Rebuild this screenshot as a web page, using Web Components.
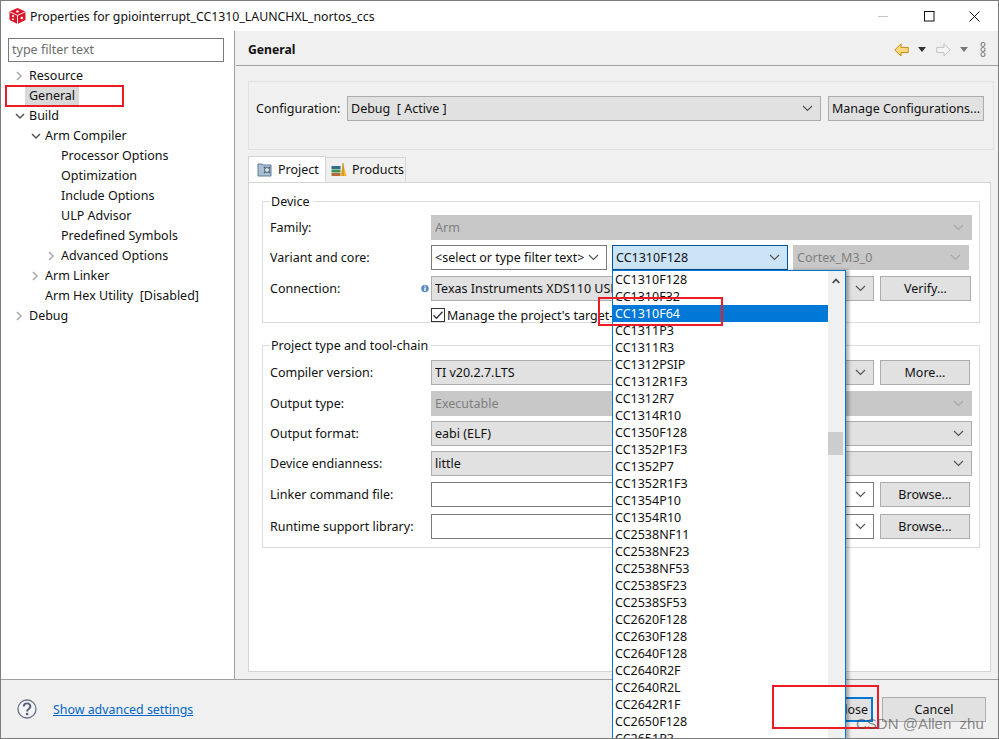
<!DOCTYPE html>
<html><head><meta charset="utf-8"><title>Properties</title>
<style>
html,body{margin:0;padding:0;background:#fff}
body{font:12.5px "Noto Sans","Open Sans",sans-serif;color:#111}
</style></head><body>
<x-window></x-window>
<script>
const CHEV=(c,w=1.2)=>`<svg width="11" height="7" viewBox="0 0 11 7"><path d="M1 1l4.5 4.5L10 1" fill="none" stroke="${c}" stroke-width="${w}"/></svg>`;
function def(name,css,render){
  customElements.define(name,class extends HTMLElement{
    constructor(){super();this.attachShadow({mode:'open'});}
    connectedCallback(){ if(this._d)return; this._d=1; this.shadowRoot.innerHTML=`<style>${css}</style>`+render(this); }
  });
}
const A=(e,n,d='')=>e.getAttribute(n)??d;

def('x-titlebar',`:host{display:flex;align-items:center;height:30px;background:#fff;font-size:12.3px;padding-left:8px;color:#111}
 .t{margin-left:4px;flex:1;white-space:pre}
 .w{display:flex;align-items:center;justify-content:center;width:46px;height:30px}`,
 ()=>`<svg width="17" height="16" viewBox="0 0 17 16"><path d="M8.5 0L16.5 3.6V12L8.5 16L.5 12V3.6Z" fill="#d8172a"/><path d="M.8 3.8L8.5 7.4L16.2 3.8M8.5 7.4V16" stroke="#fff" stroke-width=".9" fill="none"/><circle cx="8.5" cy="3.4" r="1.2" fill="#fff"/><circle cx="4" cy="8" r="1.1" fill="#fff"/><circle cx="4" cy="11.2" r=".9" fill="#fff"/><circle cx="12.8" cy="10" r="1.2" fill="#fff"/></svg>
 <span class="t">Properties for gpiointerrupt_CC1310_LAUNCHXL_nortos_ccs</span>
 <span class="w"><svg width="11" height="11"><path d="M0 5.5h10" stroke="#c4c4c4"/></svg></span>
 <span class="w"><svg width="11" height="11"><rect x=".5" y=".5" width="9.5" height="9.5" fill="none" stroke="#111"/></svg></span>
 <span class="w" style="width:44px;padding-right:2px"><svg width="11" height="11"><path d="M.5 .5l10 10M10.5 .5l-10 10" stroke="#111" fill="none"/></svg></span>`);

def('x-tree-item',`:host{display:flex;align-items:center;height:20px;white-space:pre}
 .tw{display:flex;width:13px;height:20px;align-items:center;justify-content:center;margin-right:3px}
 .l{padding:0 2px;height:18px;line-height:17px;margin-left:-2px}
 :host([selected]) .l{background:#d9d9d9;padding:0 4px 0 4px;margin-left:-4px}`,
 e=>{const lv=+A(e,'level','0'),t=A(e,'twisty');
  const ic=t==='open'?`<svg width="10" height="7" viewBox="0 0 10 7"><path d="M1 1l4 4 4-4" fill="none" stroke="#555" stroke-width="1.5"/></svg>`:
    t==='closed'?`<svg width="7" height="10" viewBox="0 0 7 10"><path d="M1 1l4 4-4 4" fill="none" stroke="#aaa" stroke-width="1.5"/></svg>`:'';
  return `<span style="width:${12+16*lv}px;flex:none"></span><span class="tw">${ic}</span><span class="l"><slot></slot></span>`});

def('x-tree',`:host{display:block;background:#fff;width:234px;flex:none;box-sizing:border-box;border-right:1px solid #a0a0a0;padding-top:7px}
 .f{box-sizing:border-box;margin-left:7px;width:216px;height:24px;border:1px solid #7a7a7a;color:#6d6d6d;padding:0 3px;line-height:21px;margin-bottom:4px}`,
 ()=>`<div class="f">type filter text</div><slot></slot>`);

def('x-header',`:host{display:flex;align-items:center;height:35px;box-sizing:border-box;border-bottom:1px solid #a0a0a0;padding:3px 0 0 12px;font-weight:700;font-size:12.2px;color:#111}
 .b{flex:1}.i{display:flex;align-items:center;margin-right:9px}`,
 ()=>`<span class="b">General</span>
 <span class="i"><svg width="15" height="14" viewBox="0 0 15 14"><path d="M7 .8L.8 7 7 13V9.6h7.2V4.4H7z" fill="#fcd97c" stroke="#c78a12" stroke-width="1"/></svg></span>
 <span class="i" style="margin-right:10px"><svg width="8" height="5"><path d="M0 0h8L4 5z" fill="#333"/></svg></span>
 <span class="i"><svg width="15" height="14" viewBox="0 0 15 14"><path d="M8 .8L14.2 7 8 13V9.6H.8V4.4H8z" fill="#f4f4f4" stroke="#c2c2c2" stroke-width="1"/></svg></span>
 <span class="i" style="margin-right:12px"><svg width="8" height="5"><path d="M0 0h8L4 5z" fill="#777"/></svg></span>
 <span class="i" style="margin-right:12px"><svg width="6" height="15" viewBox="0 0 6 15"><g fill="none" stroke="#8a8a8a" stroke-width="1.2"><circle cx="3" cy="2.5" r="2"/><circle cx="3" cy="7.5" r="2"/><circle cx="3" cy="12.5" r="2"/></g></svg></span>`);

def('x-combo',`:host{display:flex;align-items:center;box-sizing:border-box;height:25px;padding:0 7px 0 3px;white-space:pre;overflow:hidden;border:1px solid #adadad;background:#e1e1e1;color:#111}
 :host([kind=disabled]){background:#c8c8c8;border-color:#c8c8c8;color:#7f7f7f}
 :host([kind=white]){background:#fff;border-color:#7a7a7a}
 :host([kind=blue]){background:#cce4f7;border-color:#005499}
 .t{flex:1;overflow:hidden}.c{display:flex;flex:none;margin-left:4px}`,
 e=>`<span class="t"><slot></slot></span><span class="c">${CHEV(A(e,'kind')==='disabled'?'#a8a8a8':'#555')}</span>`);

def('x-btn',`:host{display:flex;align-items:center;justify-content:center;box-sizing:border-box;height:25px;border:1px solid #adadad;background:#e1e1e1;color:#111;white-space:nowrap;overflow:hidden}
 :host([def]){border:2px solid #0078d7}`,()=>`<slot></slot>`);

def('x-group',`:host{display:block}
 fieldset{margin:0;padding:0 7px 0 7px;border:1px solid #dcdcdc;min-width:0}
 legend{padding:0 3px 0 1px;margin-left:0;line-height:17px;height:17px}`,
 e=>`<fieldset><legend>${A(e,'label')}</legend><slot></slot></fieldset>`);

def('x-row',`:host{display:grid;grid-template-columns:161px 1fr;align-items:center;height:25px}
 .l{white-space:pre}
 .c{display:flex;gap:5px;align-items:center;min-width:0}`,
 e=>`<span class="l">${A(e,'label')}</span><div class="c"><slot></slot></div>`);

def('x-tabs',`:host{display:flex;align-items:flex-end;height:25px;position:relative;z-index:1;margin-bottom:-1px}
 .t{display:flex;align-items:center;box-sizing:border-box;border:1px solid #d4d4d4;border-bottom:0}
 .a{height:26px;width:78px;background:#fff;padding-left:8px;gap:5px;border-bottom:1px solid #fff}
 .b{height:24px;width:81px;margin-left:-1px;padding-left:5px;gap:5px;background:#f0f0f0;margin-bottom:1px}`,
 ()=>`<div class="t a"><svg width="16" height="15" viewBox="0 0 16 15"><path d="M1 2h4l1 1h8v11H1z" fill="#a9bfd4" stroke="#5f7d99"/><path d="M7 5l6 6M13 5l-6 6" stroke="#4f6478" stroke-width="1.6"/><circle cx="10" cy="8" r="2.4" fill="#dfe8ef" stroke="#4f6478"/></svg><span>Project</span></div>
 <div class="t b"><svg width="16" height="14" viewBox="0 0 16 14"><rect x=".5" y="3" width="9" height="3" fill="#2f6f87"/><rect x=".5" y="6.5" width="9" height="3" fill="#3f9150"/><rect x=".5" y="10" width="9" height="3" fill="#b56a3a"/><path d="M12 0l3.5 13h-6z" fill="#f2b632"/><path d="M12 0v13" stroke="#b5821c"/></svg><span>Products</span></div>`);

def('x-checkbox',`:host{display:flex;align-items:center;height:14px;white-space:nowrap;gap:2px}`,
 ()=>`<svg width="14" height="14" viewBox="0 0 14 14" style="flex:none"><rect x=".5" y=".5" width="13" height="13" fill="#fff" stroke="#333"/><path d="M2.5 7.2l3 3 6-6.4" fill="none" stroke="#333" stroke-width="1.3"/></svg><slot></slot>`);

def('x-footer',`:host{display:flex;box-sizing:border-box;height:59px;border-top:1px solid #a0a0a0;background:#f0f0f0;padding:17px 12px 0 16px;align-items:flex-start}
 a{color:#0066cc;text-decoration:underline;margin-left:16px;line-height:26px;font-size:12.4px}
 .s{flex:1}`,
 ()=>`<svg width="20" height="20" viewBox="0 0 20 20" style="margin-top:2px"><circle cx="10" cy="10" r="9" fill="#f4f4f6" stroke="#66708a" stroke-width="1.3"/><path d="M6.8 7.6c0-4.2 6.6-4.2 6.6-.2 0 2.6-3.3 2.4-3.3 5" fill="none" stroke="#525c78" stroke-width="1.9"/><circle cx="10.1" cy="15" r="1.3" fill="#525c78"/></svg>
 <a>Show advanced settings</a><span class="s"></span>
 <x-btn def style="width:105px;justify-content:flex-end;padding:0 3px 1px 0">Apply and Close</x-btn>
 <x-btn style="width:104px;margin-left:9px;padding-bottom:1px">Cancel</x-btn>`);

def('x-dropdown',`:host{position:absolute;width:234px;height:469px;box-sizing:border-box;border:solid #0078d7;border-width:1px 1px 0 1px;background:#fff;display:flex;box-shadow:3px 0 3px rgba(0,0,0,.3);overflow:hidden;z-index:5}
 .l{flex:1;min-width:0}
 .i{height:17px;line-height:17px;padding-left:2px;color:#111}
 .i.s{background:#0078d7;color:#fff}
 .sb{width:17px;background:#f0f0f0;position:relative;flex:none}
 .up{position:absolute;left:4px;top:7px;display:flex}
 .th{position:absolute;left:0;top:161px;width:15px;height:23px;background:#cdcdcd}`,
 ()=>{const L="CC1310F128 CC1310F32 CC1310F64 CC1311P3 CC1311R3 CC1312PSIP CC1312R1F3 CC1312R7 CC1314R10 CC1350F128 CC1352P1F3 CC1352P7 CC1352R1F3 CC1354P10 CC1354R10 CC2538NF11 CC2538NF23 CC2538NF53 CC2538SF23 CC2538SF53 CC2620F128 CC2630F128 CC2640F128 CC2640R2F CC2640R2L CC2642R1F CC2650F128 CC2651P3".split(' ');
  return `<div class="l">${L.map((x,i)=>`<div class="i${i==2?' s':''}">${x}</div>`).join('')}</div>
  <div class="sb"><span class="up"><svg width="8" height="6" viewBox="0 0 8 6"><path d="M.7 5L4 1.5 7.3 5" fill="none" stroke="#444" stroke-width="1.7"/></svg></span><span class="th"></span></div>`});

def('x-mark',`:host{position:absolute;box-sizing:border-box;border:2px solid #ed1c24;z-index:7}`,()=>`<slot></slot>`);
def('x-patch',`:host{position:absolute;background:#fff;z-index:6}`,()=>``);
def('x-watermark',`:host{position:absolute;z-index:8;font:15px "Liberation Sans",sans-serif;color:rgba(70,70,70,.62);white-space:pre}`,()=>`<slot></slot>`);

def('x-window',`:host{display:block;position:relative;width:999px;height:739px;box-sizing:border-box;border:1px solid #7c7c7c;overflow:hidden;background:#f0f0f0}
 .main{display:flex;height:648px}
 .r{flex:1;min-width:0;padding:0;background:#f0f0f0;border-left:1px solid #f0f0f0}
 .cfg{display:flex;align-items:center;box-sizing:border-box;height:69px;margin:15px 4px 0 12px;border:1px solid #e1e1e1;padding:0 9px 15px 7px;gap:7px}
 .tabs{margin:7px 7px 0 12px}
 .fold{box-sizing:border-box;height:490px;margin:0 7px 0 12px;background:#fff;border:1px solid #d4d4d4;padding:10px 10px 0 13px}
 x-row{margin-top:5px}`,
 ()=>`<x-titlebar></x-titlebar>
 <div class="main">
  <x-tree>
   <x-tree-item twisty="closed">Resource</x-tree-item>
   <x-tree-item selected>General</x-tree-item>
   <x-tree-item twisty="open">Build</x-tree-item>
   <x-tree-item level="1" twisty="open">Arm Compiler</x-tree-item>
   <x-tree-item level="2">Processor Options</x-tree-item>
   <x-tree-item level="2">Optimization</x-tree-item>
   <x-tree-item level="2">Include Options</x-tree-item>
   <x-tree-item level="2">ULP Advisor</x-tree-item>
   <x-tree-item level="2">Predefined Symbols</x-tree-item>
   <x-tree-item level="2" twisty="closed">Advanced Options</x-tree-item>
   <x-tree-item level="1" twisty="closed">Arm Linker</x-tree-item>
   <x-tree-item level="1">Arm Hex Utility  [Disabled]</x-tree-item>
   <x-tree-item twisty="closed">Debug</x-tree-item>
  </x-tree>
  <div class="r">
   <x-header></x-header>
   <div class="cfg"><span style="width:84px;white-space:nowrap">Configuration:</span><x-combo style="width:474px;flex:none">Debug  [ Active ]</x-combo><x-btn style="flex:1">Manage Configurations...</x-btn></div>
   <x-tabs class="tabs"></x-tabs>
   <div class="fold">
    <x-group label="Device" style="height:138px">
     <x-row label="Family:"><x-combo kind="disabled" style="flex:1">Arm</x-combo></x-row>
     <x-row label="Variant and core:"><x-combo kind="white" style="width:176px">&lt;select or type filter text&gt;</x-combo><x-combo kind="blue" style="width:176px">CC1310F128</x-combo><x-combo kind="disabled" style="width:176px">Cortex_M3_0</x-combo></x-row>
     <x-row label="Connection:" style="margin-top:6px;position:relative"><x-combo style="width:443px">Texas Instruments XDS110 USB Debug Probe</x-combo><x-btn style="width:91px;margin-left:1px">Verify...</x-btn><svg style="position:absolute;left:151px;top:8px" width="8" height="9" viewBox="0 0 8 9"><circle cx="4" cy="4.5" r="3.8" fill="#5d8fc2"/><path d="M4 3.5V7M4 1.6v1" stroke="#fff" stroke-width="1.4"/></svg></x-row>
     <x-row label="" style="margin-top:7px;height:14px"><x-checkbox>Manage the project's target-configuration automatically</x-checkbox></x-row>
    </x-group>
    <x-group label="Project type and tool-chain" style="margin-top:6px">
     <x-row label="Compiler version:" style="margin-top:6px"><x-combo style="width:443px">TI v20.2.7.LTS</x-combo><x-btn style="width:90px;margin-left:1px">More...</x-btn></x-row>
     <x-row label="Output type:" style="margin-top:6px"><x-combo kind="disabled" style="flex:1">Executable</x-combo></x-row>
     <x-row label="Output format:"><x-combo style="flex:1">eabi (ELF)</x-combo></x-row>
     <x-row label="Device endianness:"><x-combo style="flex:1">little</x-combo></x-row>
     <x-row label="Linker command file:" style="margin-top:6px"><x-combo kind="white" style="width:443px"></x-combo><x-btn style="width:90px;margin-left:1px">Browse...</x-btn></x-row>
     <x-row label="Runtime support library:" style="margin-top:7px"><x-combo kind="white" style="width:443px"></x-combo><x-btn style="width:90px;margin-left:1px">Browse...</x-btn></x-row>
     <div style="height:8px"></div>
    </x-group>
   </div>
  </div>
 </div>
 <x-footer></x-footer>
 <x-dropdown style="left:611px;top:269px"></x-dropdown>
 <x-patch style="left:773px;top:686px;width:71px;height:41px"></x-patch>
 <x-mark style="left:4px;top:84px;width:119px;height:22px"></x-mark>
 <x-mark style="left:597px;top:296px;width:125px;height:29px"></x-mark>
 <x-mark style="left:771px;top:684px;width:107px;height:44px"></x-mark>
 <x-watermark style="left:855px;top:714px">CSDN @Allen  zhu</x-watermark>`);
</script>
</body></html>
